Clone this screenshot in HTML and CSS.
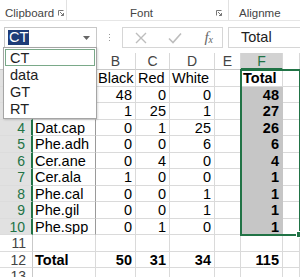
FILE: index.html
```html
<!DOCTYPE html>
<html>
<head>
<meta charset="utf-8">
<link rel="stylesheet" href="styles.css">
</head>
<body>
<div class="app">
  <div class="ribbon">
    <div class="group g1"><span class="glabel">Clipboard</span><svg class="launch" width="6" height="6" viewBox="0 0 6 6"><path d="M0.5 0.5H5.5M0.5 0.5V5.5M2 2L5.5 5.5M5.5 3V5.5H3" fill="none" stroke="#777" stroke-width="1"/></svg></div>
    <div class="group g2"><span class="glabel">Font</span><svg class="launch" width="6" height="6" viewBox="0 0 6 6"><path d="M0.5 0.5H5.5M0.5 0.5V5.5M2 2L5.5 5.5M5.5 3V5.5H3" fill="none" stroke="#777" stroke-width="1"/></svg></div>
    <div class="group g3"><span class="glabel">Alignme</span></div>
  </div>
  <div class="fbar">
    <div class="namebox"><span class="sel">CT</span><svg class="caret" width="7" height="4" viewBox="0 0 7 4"><path d="M0 0H7L3.5 4Z" fill="#666"/></svg></div>
    <div class="dots"><i></i><i></i><i></i></div>
    <div class="fbtns">
      <svg class="xic" width="14" height="14" viewBox="0 0 14 14"><path d="M2 2L12 12M12 2L2 12" stroke="#bdbdbd" stroke-width="1.4"/></svg>
      <svg class="chk" width="14" height="12" viewBox="0 0 14 12"><path d="M1 6.5L5 10.5L13 1.5" fill="none" stroke="#bdbdbd" stroke-width="1.6"/></svg>
      <span class="fx">f<sub>x</sub></span>
    </div>
    <div class="fcontent">Total</div>
  </div>
  <div class="sheetwrap">
    <div class="grid">
      <div class="hc corner"></div>
      <div class="hc">A</div><div class="hc">B</div><div class="hc">C</div><div class="hc">D</div><div class="hc">E</div><div class="hc hsel">F</div><div class="hc"></div>

      <div class="rh rsel">1</div><div class="c ab"></div><div class="c">Black</div><div class="c">Red</div><div class="c">White</div><div class="c"></div><div class="c f b">Total</div><div class="c"></div>
      <div class="rh rsel">2</div><div class="c ab"></div><div class="c n">48</div><div class="c n">0</div><div class="c n">0</div><div class="c"></div><div class="c n b s">48</div><div class="c"></div>
      <div class="rh rsel">3</div><div class="c ab"></div><div class="c n">1</div><div class="c n">25</div><div class="c n">1</div><div class="c"></div><div class="c n b s">27</div><div class="c"></div>
      <div class="rh rsel">4</div><div class="c ab">Dat.cap</div><div class="c n">0</div><div class="c n">1</div><div class="c n">25</div><div class="c"></div><div class="c n b s">26</div><div class="c"></div>
      <div class="rh rsel">5</div><div class="c ab">Phe.adh</div><div class="c n">0</div><div class="c n">0</div><div class="c n">6</div><div class="c"></div><div class="c n b s">6</div><div class="c"></div>
      <div class="rh rsel">6</div><div class="c ab">Cer.ane</div><div class="c n">0</div><div class="c n">4</div><div class="c n">0</div><div class="c"></div><div class="c n b s">4</div><div class="c"></div>
      <div class="rh rsel">7</div><div class="c ab">Cer.ala</div><div class="c n">1</div><div class="c n">0</div><div class="c n">0</div><div class="c"></div><div class="c n b s">1</div><div class="c"></div>
      <div class="rh rsel">8</div><div class="c ab">Phe.cal</div><div class="c n">0</div><div class="c n">0</div><div class="c n">1</div><div class="c"></div><div class="c n b s">1</div><div class="c"></div>
      <div class="rh rsel">9</div><div class="c ab">Phe.gil</div><div class="c n">0</div><div class="c n">0</div><div class="c n">1</div><div class="c"></div><div class="c n b s">1</div><div class="c"></div>
      <div class="rh rsel">10</div><div class="c ab">Phe.spp</div><div class="c n">0</div><div class="c n">1</div><div class="c n">0</div><div class="c"></div><div class="c n b s">1</div><div class="c"></div>
      <div class="rh">11</div><div class="c"></div><div class="c"></div><div class="c"></div><div class="c"></div><div class="c"></div><div class="c"></div><div class="c"></div>
      <div class="rh">12</div><div class="c b">Total</div><div class="c n b">50</div><div class="c n b">31</div><div class="c n b">34</div><div class="c"></div><div class="c n b">115</div><div class="c"></div>
      <div class="rh">13</div><div class="c"></div><div class="c"></div><div class="c"></div><div class="c"></div><div class="c"></div><div class="c"></div><div class="c"></div>

      <div class="range"><span class="handle"></span></div>
    </div>
    <ul class="dropdown">
      <li class="active">CT</li>
      <li>data</li>
      <li>GT</li>
      <li>RT</li>
    </ul>
  </div>
</div>
</body>
</html>
```
FILE: styles.css
```css
html, body {
  margin: 0;
  padding: 0;
  background: #fff;
}
body {
  width: 300px;
  height: 277px;
  overflow: hidden;
  font-family: "Liberation Sans", Arial, sans-serif;
}
.app {
  width: 300px;
  height: 277px;
  overflow: hidden;
  display: flex;
  flex-direction: column;
}
.ribbon {
  height: 21px;
  display: flex;
  border-bottom: 1px solid #e6e6e6;
  box-sizing: border-box;
  flex: none;
}
.group {
  display: flex;
  align-items: center;
  box-sizing: border-box;
  font-size: 11.5px;
  color: #444;
  padding-top: 5px;
}
.g1 {
  width: 67px;
  border-right: 1px solid #e1e1e1;
  padding-left: 5px;
}
.g1 .launch { margin-left: 4px; }
.g2 {
  width: 162px;
  border-right: 1px solid #e1e1e1;
  padding-left: 63px;
}
.g2 .launch { margin-left: auto; margin-right: 6px; }
.g3 {
  padding-left: 10px;
}
.fbar {
  display: flex;
  align-items: center;
  height: 21px;
  margin-top: 6px;
  flex: none;
}
.namebox {
  margin-left: 4px;
  width: 93px;
  height: 21px;
  box-sizing: border-box;
  border: 1px solid #c8c8c8;
  display: flex;
  align-items: center;
  padding-left: 3px;
  font-size: 14.5px;
}
.sel {
  background: #1e3c78;
  color: #fff;
  padding: 0 1px;
  line-height: 15px;
}
.caret { margin-left: auto; margin-right: 6px; }
.dots {
  width: 25px;
  display: flex;
  flex-direction: column;
  align-items: center;
  gap: 2px;
}
.dots i {
  width: 1px;
  height: 1px;
  background: #999;
  display: block;
}
.fbtns {
  width: 101px;
  height: 21px;
  box-sizing: border-box;
  border: 1px solid #d6d6d6;
  display: flex;
  align-items: center;
}
.xic { margin-left: 11px; }
.chk { margin-left: 20px; }
.fx {
  margin-left: auto;
  margin-right: 9px;
  font-family: "Liberation Serif", serif;
  font-style: italic;
  font-size: 15px;
  color: #666;
}
.fx sub { font-size: 10px; vertical-align: -1px; }
.fcontent {
  margin-left: 5px;
  flex: 1;
  height: 21px;
  box-sizing: border-box;
  border: 1px solid #d6d6d6;
  border-right: none;
  font-size: 14.5px;
  color: #222;
  padding-left: 12px;
  line-height: 19px;
}
.sheetwrap {
  position: relative;
  margin-top: 5px;
  flex: 1;
}
.grid {
  position: relative;
  display: grid;
  grid-template-columns: 33px 63px 40px 34px 45px 26px 42px 1fr;
  grid-template-rows: 17px repeat(13, 16.5px);
  font-size: 14.5px;
  color: #000;
}
.hc {
  box-sizing: border-box;
  border-right: 1px solid #d8d8d8;
  border-bottom: 1px solid #c9c9c9;
  color: #444;
  text-align: center;
  line-height: 16px;
  font-size: 14px;
  background: #fff;
}
.hc.hsel {
  background: #d2d2d2;
  color: #217346;
  border-bottom: 2px solid #217346;
}
.rh {
  box-sizing: border-box;
  border-right: 1px solid #c9c9c9;
  border-bottom: 1px solid #dcdcdc;
  text-align: right;
  padding-right: 6px;
  color: #444;
  font-size: 14px;
  line-height: 16px;
  background: #fff;
}
.rh.rsel {
  background: #e1e1e1;
  color: #217346;
  border-right: 2px solid #217346;
}
.c {
  box-sizing: border-box;
  border-right: 1px solid #dadada;
  border-bottom: 1px solid #dadada;
  line-height: 16px;
  padding-left: 2px;
  white-space: nowrap;
  overflow: hidden;
}
.c.ab { border-right-color: #9a9a9a; }
.c.n { text-align: right; padding-right: 3px; padding-left: 0; }
.c.b { font-weight: bold; }
.c.s { background: #c6c6c6; border-right-color: #c6c6c6; border-bottom-color: #c6c6c6; }
.c.f { background: #fff; }
.range {
  position: absolute;
  grid-column: 7;
  grid-row: 2 / 12;
  top: -1px;
  left: -1px;
  right: -1px;
  bottom: -1px;
  border: 2px solid #217346;
  pointer-events: none;
}
.handle {
  position: absolute;
  right: -4px;
  bottom: -4px;
  width: 5px;
  height: 5px;
  background: #217346;
  border: 1px solid #fff;
}
.dropdown {
  position: absolute;
  left: 3px;
  top: -6px;
  width: 94px;
  margin: 0;
  padding: 1px 0;
  list-style: none;
  box-sizing: border-box;
  border: 1px solid #a5a5a5;
  background: #fff;
  box-shadow: 1px 1px 2px rgba(0,0,0,0.15);
  font-size: 14.5px;
  color: #222;
}
.dropdown li {
  height: 17px;
  line-height: 16px;
  padding-left: 4px;
  box-sizing: border-box;
  border: 1px solid transparent;
  margin: 0 1px;
}
.dropdown li.active {
  border-color: #7aa989;
}
```
